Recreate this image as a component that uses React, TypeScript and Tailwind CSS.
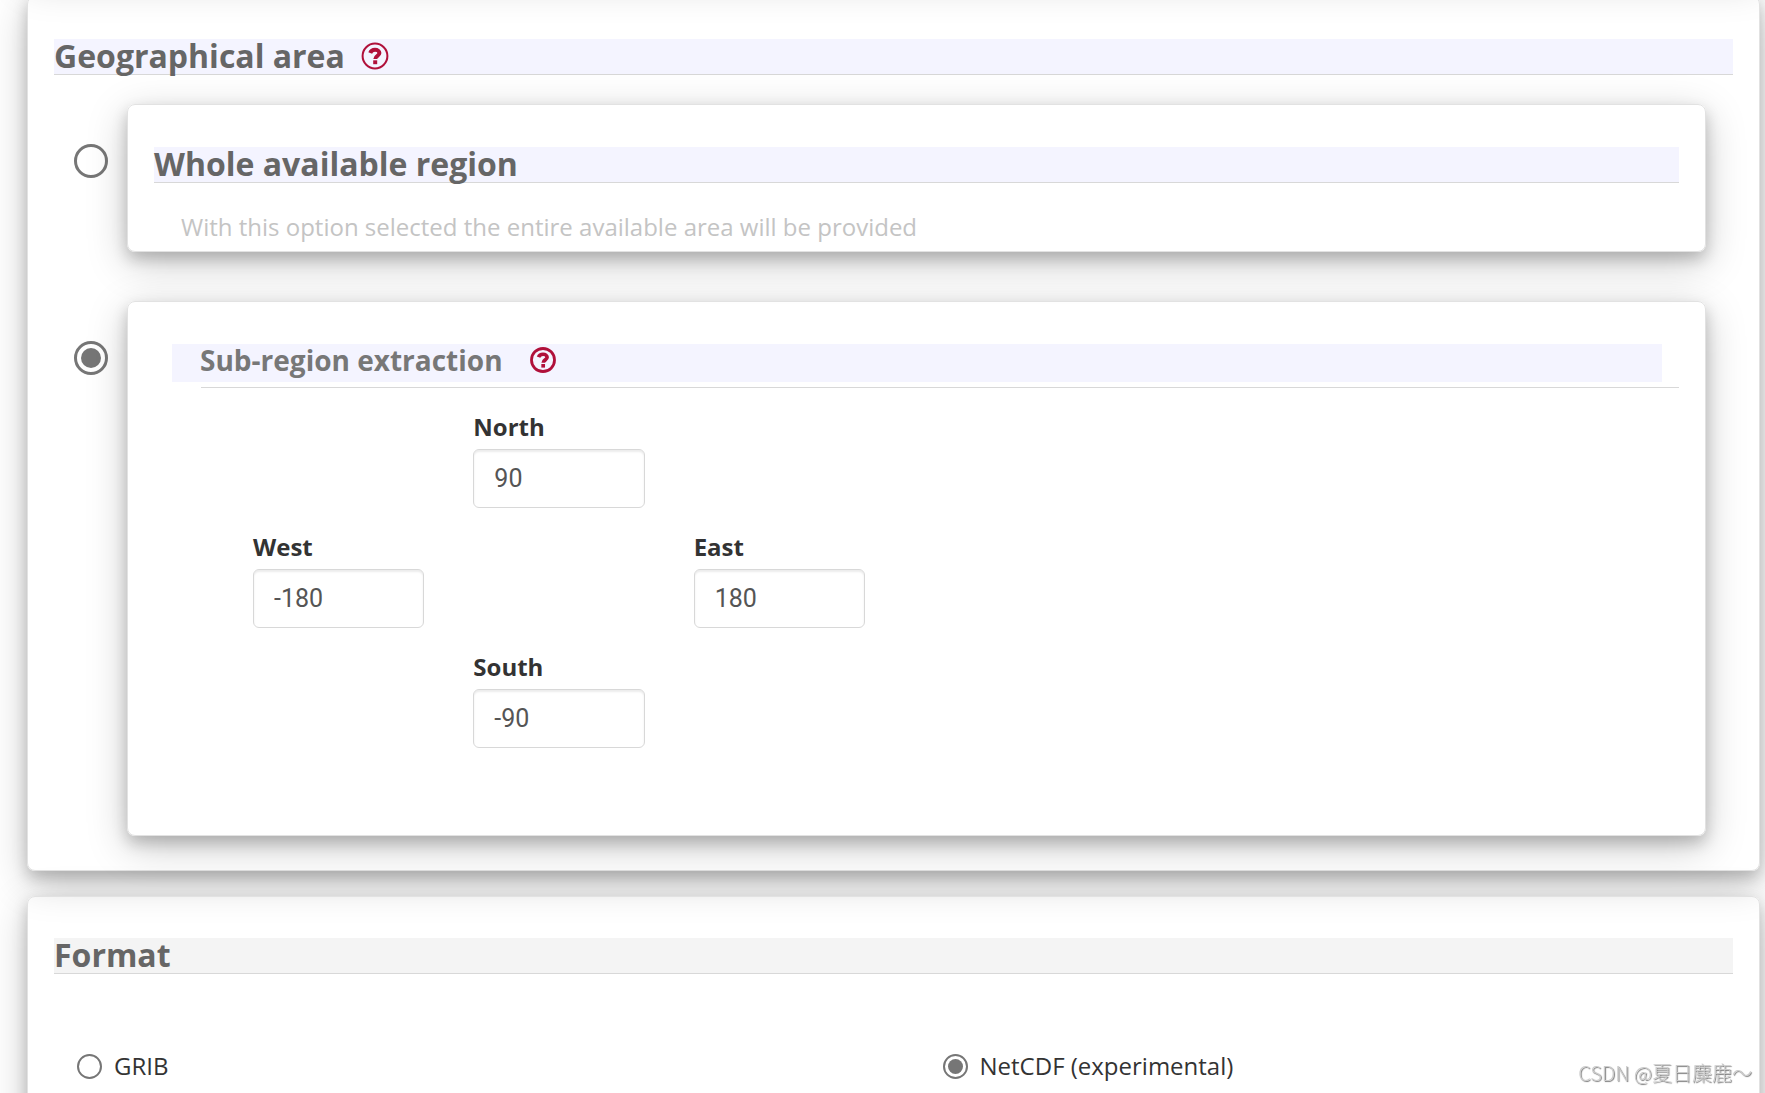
import { useState } from 'react';
import { clsx } from 'clsx';

const cardClass =
  'rounded-lg border border-[#e2e2e2] shadow-[0_7px_15px_0_rgba(0,0,0,0.2),0_11px_40px_0_rgba(0,0,0,0.21)]';

function HelpIcon({ size, ring }: { size: number; ring: number }) {
  return (
    <svg width={size} height={size} viewBox="0 0 28 28" fill="none" stroke="#b0103a" aria-hidden="true">
      <circle cx="14" cy="14" r="12.4" strokeWidth={ring} />
      <path d="M9.200 11C10 8.800 11.700 7.800 14 7.800c2.600 0 4.400 1.400 4.400 3.300 0 2.900-4.100 2.600-4.100 5.900" strokeWidth="4" />
      <path d="M14.200 18.300v3.900" strokeWidth="4" />
    </svg>
  );
}

function HelpButton({ label, size, ring }: { label: string; size: number; ring: number }) {
  return (
    <button type="button" aria-label={label} className="flex shrink-0 cursor-pointer">
      <HelpIcon size={size} ring={ring} />
    </button>
  );
}

function Radio({
  id,
  name,
  checked,
  onChange,
  large,
  labelledBy,
}: {
  id: string;
  name: string;
  checked: boolean;
  onChange: () => void;
  large?: boolean;
  labelledBy?: string;
}) {
  return (
    <input
      id={id}
      type="radio"
      name={name}
      checked={checked}
      onChange={onChange}
      aria-labelledby={labelledBy}
      className={clsx(
        'shrink-0 appearance-none rounded-full border-[#767676] bg-white bg-clip-content checked:bg-[#767676]',
        large ? 'size-[34px] border-3 p-1' : 'size-[25px] border-2 p-[3px]'
      )}
    />
  );
}

function Coordinate({ label, initial, className }: { label: string; initial: string; className: string }) {
  const [value, setValue] = useState(initial);
  const id = `extent-${label.toLowerCase()}`;

  return (
    <div className={clsx('flex flex-col', className)}>
      <label htmlFor={id} className="text-[24px] leading-9 font-bold text-[#333333]">
        {label}
      </label>
      <input
        id={id}
        type="text"
        value={value}
        onChange={(e) => setValue(e.target.value)}
        className="mt-1 h-[59px] w-full rounded-md border border-[#d8d8d8] bg-white px-5 font-[Roboto,sans-serif] text-[25px] text-[#555555] shadow-[inset_0_2px_2px_rgba(0,0,0,0.08)]"
      />
    </div>
  );
}

export default function App() {
  const [area, setArea] = useState('sub');
  const [format, setFormat] = useState('netcdf');

  return (
    <div className="h-screen overflow-hidden bg-white pr-[5px] pl-[27px] font-['Open_Sans',sans-serif] text-[#333333]">
      {/* Tail of the section scrolled off above */}
      <div className={clsx(cardClass, '-mt-[69px] mb-[25px] h-10')} />

      <form className="flex flex-col gap-[25px]">
        <section className={clsx(cardClass, 'px-[26px] pt-[42px] pb-[34px]')}>
          <div className="flex h-9 items-center gap-4 border-b border-[#d8d8d8] bg-[#f4f4ff] pb-0.5">
            <h2 className="text-[32px] leading-[34px] font-bold text-[#666666]">Geographical area</h2>
            <HelpButton label="Help on geographical area" size={28} ring={2} />
          </div>

          <div className="mt-[29px] mr-[27px] ml-5 flex flex-col gap-[49px]">
            <div className="flex items-start gap-[19px]">
              <div className="flex pt-10">
                <Radio id="area-whole" name="area" large labelledBy="area-whole-title" checked={area === 'whole'} onChange={() => setArea('whole')} />
              </div>
              <div className={clsx(cardClass, 'flex-1 px-[26px] pt-[42px] pb-[6px]')}>
                <h3 id="area-whole-title" className="h-9 border-b border-[#d8d8d8] bg-[#f4f4ff] text-[32px] leading-[34px] font-bold text-[#666666]">
                  Whole available region
                </h3>
                <p className="mt-[26px] ml-[27px] text-[24px] leading-9 text-[#c4c4c4]">
                  With this option selected the entire available area will be provided
                </p>
              </div>
            </div>

            <div className="flex items-start gap-[19px]">
              <div className="flex pt-10">
                <Radio id="area-sub" name="area" large labelledBy="area-sub-title" checked={area === 'sub'} onChange={() => setArea('sub')} />
              </div>
              <div className={clsx(cardClass, 'flex-1 pt-[42px] pr-[26px] pb-[87px] pl-11')}>
                <div className="mr-[17px] flex h-[38px] items-center gap-[27px] bg-[#f4f4ff] pb-1.5 pl-7">
                  <h3 id="area-sub-title" className="text-[28px] leading-8 font-bold text-[#777777]">
                    Sub-region extraction
                  </h3>
                  <HelpButton label="Help on sub-region extraction" size={26} ring={3} />
                </div>
                <hr className="mt-[5px] ml-[29px] border-[#d8d8d8]" />
                <div className="mt-[21px] ml-[81px] grid w-[612px] grid-cols-3 gap-x-[49px] gap-y-[21px]">
                  <Coordinate label="North" initial="90" className="col-start-2 row-start-1" />
                  <Coordinate label="West" initial="-180" className="col-start-1 row-start-2" />
                  <Coordinate label="East" initial="180" className="col-start-3 row-start-2" />
                  <Coordinate label="South" initial="-90" className="col-start-2 row-start-3" />
                </div>
              </div>
            </div>
          </div>
        </section>

        <section className={clsx(cardClass, 'pt-[41px] pb-20')}>
          <h2 className="mx-[26px] h-9 border-b border-[#d8d8d8] bg-[#f4f4f4] text-[32px] leading-[34px] font-bold text-[#666666]">
            Format
          </h2>
          <div className="mt-[74px] grid grid-cols-2 text-[24px] leading-9">
            <div className="flex items-center gap-3 pl-[49px]">
              <Radio id="format-grib" name="format" checked={format === 'grib'} onChange={() => setFormat('grib')} />
              <label htmlFor="format-grib">GRIB</label>
            </div>
            <div className="flex items-center gap-3 pl-[49px]">
              <Radio id="format-netcdf" name="format" checked={format === 'netcdf'} onChange={() => setFormat('netcdf')} />
              <label htmlFor="format-netcdf">NetCDF (experimental)</label>
            </div>
          </div>
        </section>
      </form>

      <div className="pointer-events-none fixed right-[13px] bottom-1.5 font-['Noto_Sans_CJK_SC',sans-serif] text-[20px] leading-7 font-light text-[#cccccc] [text-shadow:1px_1px_1px_#777777]">
        CSDN @夏日麋鹿～
      </div>
    </div>
  );
}
